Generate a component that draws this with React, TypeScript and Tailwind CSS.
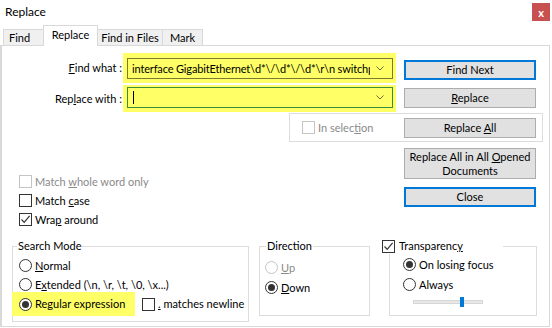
import React from 'react';

const Check = ({ checked = false, disabled = false }: { checked?: boolean; disabled?: boolean }) => (
  <span
    className={`flex h-[13px] w-[13px] shrink-0 items-center justify-center border bg-white ${
      disabled ? 'border-[#c4c4c4]' : 'border-[#333333]'
    }`}
  >
    {checked && (
      <svg width="11" height="11" viewBox="0 0 11 11">
        <path d="M1.5 5.5 L4.2 8.3 L9.6 1.8" fill="none" stroke="#333" strokeWidth="1.2" />
      </svg>
    )}
  </span>
);

const Radio = ({ checked = false, disabled = false }: { checked?: boolean; disabled?: boolean }) => (
  <span
    className={`flex h-[13px] w-[13px] shrink-0 items-center justify-center rounded-full border bg-white ${
      disabled ? 'border-[#c4c4c4]' : 'border-[#333333]'
    }`}
  >
    {checked && <span className="h-[7px] w-[7px] rounded-full bg-[#333333]" />}
  </span>
);

const Btn = ({
  children,
  primary = false,
  className = '',
}: {
  children: React.ReactNode;
  primary?: boolean;
  className?: string;
}) => (
  <button
    className={`flex w-[132px] shrink-0 items-center justify-center bg-[#e1e1e1] text-[11px] leading-[14px] text-black ${
      primary ? 'border-2 border-[#0078d7]' : 'border border-[#adadad]'
    } ${className}`}
  >
    <span>{children}</span>
  </button>
);

const Chevron = () => (
  <svg width="8" height="5" viewBox="0 0 8 5" className="shrink-0">
    <path d="M0.5 0.5 L4 4 L7.5 0.5" fill="none" stroke="#6b6b3a" strokeWidth="1" />
  </svg>
);

export default function App() {
  return (
    <div className="flex h-[328px] w-[552px] flex-col overflow-hidden whitespace-nowrap bg-white font-['Lato',sans-serif] text-[11px] leading-[16px] text-black">
      {/* title bar */}
      <div className="flex h-[25px] shrink-0 items-start justify-between">
        <span className="pl-[5px] pt-[4px] text-[12px] leading-[16px]">Replace</span>
        <button className="mr-[2px] mt-[3px] flex h-[18px] w-[18px] items-center justify-center bg-[#c75050] text-[11px] font-bold leading-none text-white">
          x
        </button>
      </div>

      {/* tabs */}
      <div className="flex h-[21px] shrink-0 items-end pl-[3px]">
        <div className="flex h-[17px] w-[40px] items-center border-l border-t border-[#d9d9d9] bg-[#f0f0f0] pl-[5px]">Find</div>
        <div className="relative z-10 flex h-[21px] w-[55px] items-center justify-center border-x border-t border-[#d9d9d9] bg-white pb-[2px]">
          Replace
        </div>
        <div className="flex h-[17px] w-[65px] items-center justify-center border-r border-t border-[#d9d9d9] bg-[#f0f0f0]">
          Find in Files
        </div>
        <div className="flex h-[17px] w-[40px] items-center justify-center border-r border-t border-[#d9d9d9] bg-[#f0f0f0]">
          Mark
        </div>
      </div>

      {/* panel */}
      <div className="-mt-px flex h-[282px] w-[550px] shrink-0 flex-col border border-l-2 border-[#d9d9d9]">
        {/* find what */}
        <div className="mt-[7px] flex items-start">
          <div className="flex h-[30px] w-[121px] items-center justify-end pr-px">
            <span>
              <u>F</u>ind what :
            </span>
          </div>
          <div className="bg-[#ffff66] pb-[4px] pl-[4px] pr-[3px] pt-[5px]">
            <div className="flex h-[21px] w-[266px] items-center border border-[#7a7a31] pl-[4px] pr-[8px]">
              <span className="flex-1 overflow-hidden tracking-[-0.15px]">
                interface GigabitEthernet\d*\/\d*\/\d*\r\n switchport
              </span>
              <span className="ml-[6px]">
                <Chevron />
              </span>
            </div>
          </div>
          <Btn primary className="ml-[8px] mt-[7px] h-[20px]">
            Find Next
          </Btn>
        </div>

        {/* replace with */}
        <div className="mt-[2px] flex items-start">
          <div className="flex h-[27px] w-[121px] items-center justify-end pr-px">
            <span>
              Rep<u>l</u>ace with :
            </span>
          </div>
          <div className="bg-[#ffff66] pb-[4px] pl-[4px] pr-[3px] pt-[2px]">
            <div className="flex h-[21px] w-[266px] items-center border border-[#3d8b3d] pl-[5px] pr-[8px]">
              <span className="h-[13px] w-px bg-black" />
              <span className="flex-1" />
              <Chevron />
            </div>
          </div>
          <Btn className="ml-[8px] mt-[3px] h-[20px]">
            <u>R</u>eplace
          </Btn>
        </div>

        {/* in selection */}
        <div className="ml-[287px] mt-[1px] flex h-[29px] w-[254px] items-center border border-[#dcdcdc] pl-[12px] pr-[6px]">
          <Check disabled />
          <span className="ml-[3px] text-[#8a8a8a]">
            In selec<u>t</u>ion
          </span>
          <Btn className="ml-auto h-[20px]">
            Replace <u>A</u>ll
          </Btn>
        </div>

        {/* options + buttons */}
        <div className="mt-[6px] flex items-start">
          <div className="ml-[17px] flex w-[385px] flex-col gap-[6px] pt-[27px]">
            <div className="flex h-[13px] items-center">
              <Check disabled />
              <span className="ml-[3px] text-[#8a8a8a]">
                Match <u>w</u>hole word only
              </span>
            </div>
            <div className="flex h-[13px] items-center">
              <Check />
              <span className="ml-[3px]">
                Match <u>c</u>ase
              </span>
            </div>
            <div className="flex h-[13px] items-center">
              <Check checked />
              <span className="ml-[3px]">
                Wra<u>p</u> around
              </span>
            </div>
          </div>
          <div className="flex flex-col">
            <Btn className="h-[31px] text-center">
              Replace All in All <u>O</u>pened
              <br />
              Documents
            </Btn>
            <Btn primary className="mt-[8px] h-[20px]">
              Close
            </Btn>
          </div>
        </div>

        {/* groups */}
        <div className="mt-[12px] flex items-start">
          <fieldset className="ml-[10px] h-[84px] w-[237px] min-w-0 border border-[#dcdcdc]">
            <legend className="ml-[4px] px-[1px] leading-[16px]">Search Mode</legend>
            <div className="flex flex-col pl-[6px]">
              <div className="mt-[5px] flex h-[13px] items-center">
                <Radio />
                <span className="ml-[3px]">
                  <u>N</u>ormal
                </span>
              </div>
              <div className="mt-[6px] flex h-[13px] items-center">
                <Radio />
                <span className="ml-[3px]">E<u>x</u>tended (\n, \r, \t, \0, \x...)</span>
              </div>
              <div className="mt-[1px] flex items-center">
                <div className="-ml-[7px] flex h-[24px] w-[123px] items-center bg-[#ffff66] pl-[7px]">
                  <Radio checked />
                  <span className="ml-[3px]">
                    Re<u>g</u>ular expression
                  </span>
                </div>
                <span className="ml-[7px]">
                  <Check />
                </span>
                <span className="ml-[3px]">
                  <u>.</u> matches newline
                </span>
              </div>
            </div>
          </fieldset>

          <fieldset className="ml-[10px] h-[78px] w-[111px] min-w-0 border border-[#dcdcdc]">
            <legend className="ml-[6px] px-[1px] leading-[16px]">Direction</legend>
            <div className="flex flex-col pl-[5px]">
              <div className="mt-[7px] flex h-[13px] items-center">
                <Radio disabled />
                <span className="ml-[3px] text-[#8a8a8a]">
                  <u>U</u>p
                </span>
              </div>
              <div className="mt-[7px] flex h-[13px] items-center">
                <Radio checked />
                <span className="ml-[3px]">
                  <u>D</u>own
                </span>
              </div>
            </div>
          </fieldset>

          <fieldset className="ml-[19px] h-[78px] w-[148px] min-w-0 border border-[#dcdcdc]">
            <legend className="-ml-[8px] flex h-[16px] w-[121px] items-center">
              <Check checked />
              <span className="ml-[4px]">
                Transparenc<u>y</u>
              </span>
            </legend>
            <div className="flex flex-col pl-[13px]">
              <div className="mt-[4px] flex h-[13px] items-center">
                <Radio checked />
                <span className="ml-[3px]">On losing focus</span>
              </div>
              <div className="mt-[7px] flex h-[13px] items-center">
                <Radio />
                <span className="ml-[3px]">Always</span>
              </div>
              <div className="relative ml-[10px] mt-[6px] flex h-[10px] w-[70px] items-center">
                <div className="h-[4px] w-full border border-[#d6d6d6] bg-[#e7e7e7]" />
                <div className="absolute left-[47px] top-0 h-[10px] w-[4px] bg-[#007ad9]" />
              </div>
            </div>
          </fieldset>
        </div>
      </div>
    </div>
  );
}
